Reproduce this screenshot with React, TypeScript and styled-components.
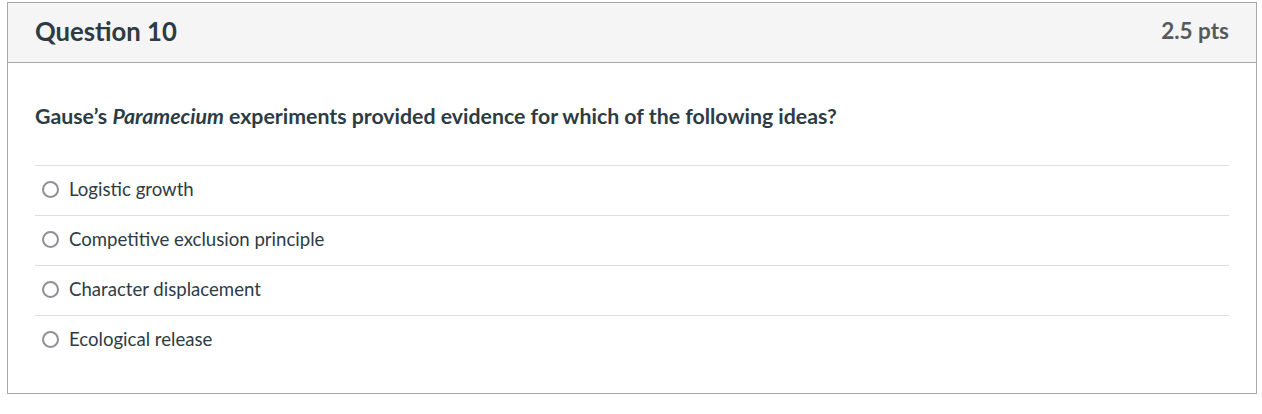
import React from "react";
import styled, { createGlobalStyle } from "styled-components";

const Global = createGlobalStyle`
  body {
    margin: 0;
    padding: 2px 5px 0 7px;
    background: #ffffff;
    font-family: Lato, "Open Sans", sans-serif;
    color: #2d3b45;
  }
`

const Card = styled.div`
  border: 1px solid #a8a8a8;
  height: 392px;
  box-sizing: border-box;
`

const Header = styled.div`
  background: #f5f5f5;
  border-bottom: 1px solid #a8a8a8;
  height: 60px;
  box-sizing: border-box;
  padding: 0 27px 4px;
  display: flex;
  align-items: center;
  justify-content: space-between;
`

const Title = styled.h2`
  margin: 0;
  font-size: 25.7px;
  font-weight: 700;
  color: #2d3b45;
`

const Points = styled.div`
  font-size: 22.5px;
  font-weight: 700;
  color: #565a5c;
`

const Body = styled.div`
  padding: 39px 27px 0;
`

const Prompt = styled.p`
  margin: 0 0 35px;
  font-size: 21.3px;
  font-weight: 700;
  line-height: 28px;
  em { font-style: italic; }
`

const Answers = styled.ul`
  list-style: none;
  margin: 0;
  padding: 0;
`

const Answer = styled.li`
  border-top: 1px solid #dddddd;
  display: flex;
  align-items: center;
  padding: 0 0 3px 7px;
  box-sizing: border-box;
  height: 50px;
  gap: 10px;
  font-size: 18.6px;
`

const Radio = styled.span`
  width: 13px;
  height: 13px;
  border: 2px solid #8f8f95;
  border-radius: 50%;
  flex: none;
`

const options = [
  "Logistic growth",
  "Competitive exclusion principle",
  "Character displacement",
  "Ecological release",
];

function App() {
  return (
    <>
      <Global />
      <Card>
        <Header>
          <Title>Question 10</Title>
          <Points>2.5 pts</Points>
        </Header>
        <Body>
          <Prompt>
            Gause’s <em>Paramecium</em> experiments provided evidence for which of the following ideas?
          </Prompt>
          <Answers>
            {options.map(o => (
              <Answer key={o}>
                <Radio />
                <span>{o}</span>
              </Answer>
            ))}
          </Answers>
        </Body>
      </Card>
    </>
  );
}

export default App;
